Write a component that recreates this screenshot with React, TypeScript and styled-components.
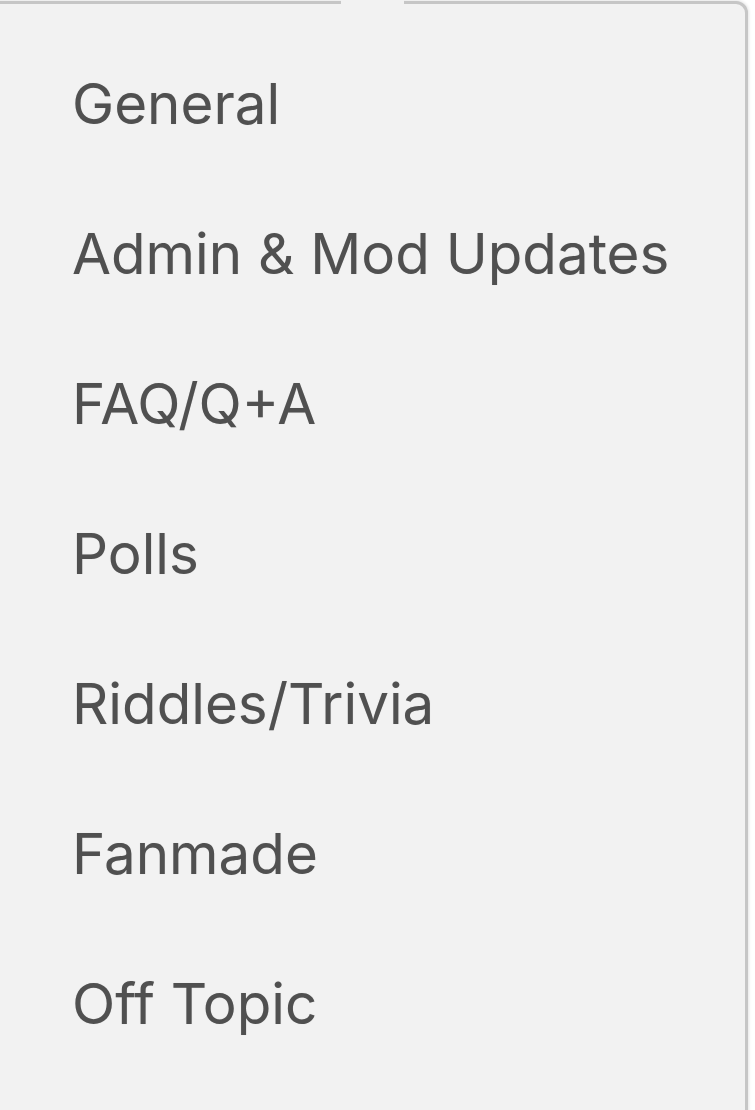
import React from 'react';
import styled, { createGlobalStyle } from 'styled-components';

const GlobalStyle = createGlobalStyle`
  html, body {
    margin: 0;
    padding: 0;
    background: #ffffff;
    overflow: hidden;
  }
`;

const categories = [
  'General',
  'Admin & Mod Updates',
  'FAQ/Q+A',
  'Polls',
  'Riddles/Trivia',
  'Fanmade',
  'Off Topic',
];

export default function App() {
  return (
    <>
      <GlobalStyle />
      <Menu>
        <Notch />
        <List>
          {categories.map((name) => (
            <Item key={name}>{name}</Item>
          ))}
        </List>
      </Menu>
    </>
  );
}

const Menu = styled.div`
  position: relative;
  box-sizing: border-box;
  margin: 1px 0 0 -20px;
  width: 768px;
  height: 1200px;
  background-color: #f2f2f2;
  border: 3px solid #c6c6c6;
  border-radius: 0 12px 0 0;
  box-shadow: 0 0 3px 1px rgb(0 0 0 / 0.1);
`;

// gap in the top edge where the caret joins the trigger
const Notch = styled.div`
  position: absolute;
  top: -4px;
  left: 358px;
  width: 63px;
  height: 8px;
  background-color: #f2f2f2;
`;

const List = styled.ul`
  list-style: none;
  margin: 0;
  padding: 25px 0 0 89px;
`;

const Item = styled.li`
  font-family: Inter, 'Noto Sans', sans-serif;
  font-size: 56.5px;
  line-height: 150px;
  color: #505050;
  white-space: nowrap;
  text-shadow: 0 0 1px rgb(0 0 0 / 0.15);
`;
